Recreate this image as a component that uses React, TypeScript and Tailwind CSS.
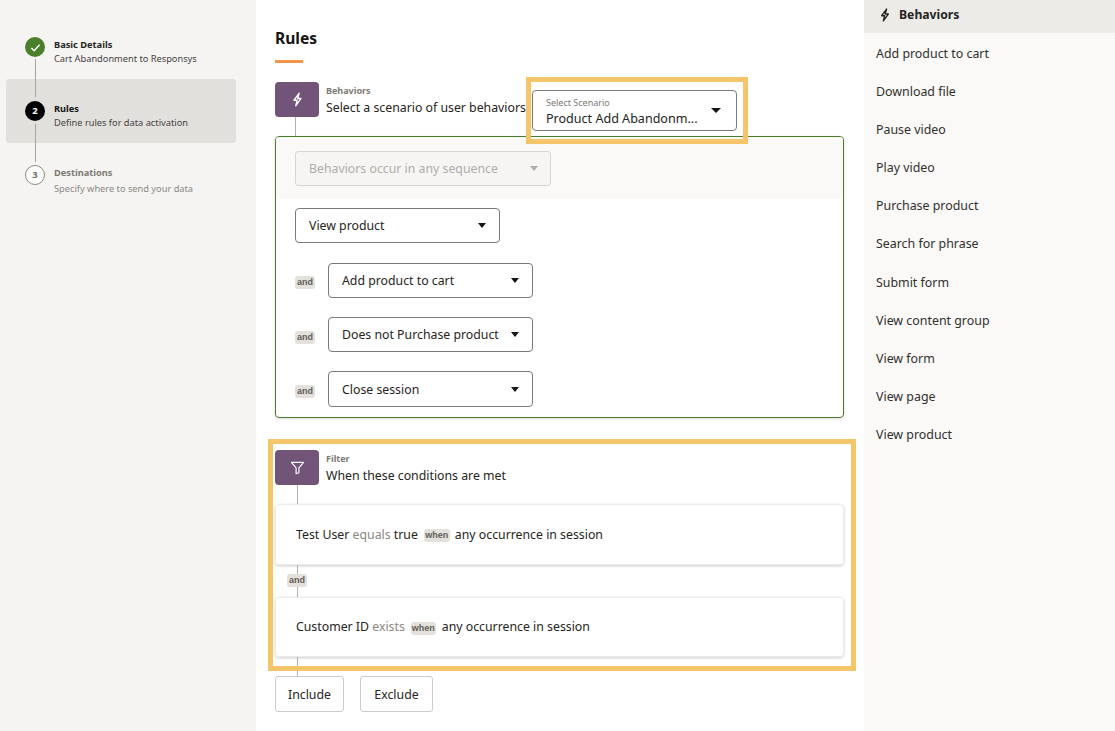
import React from "react";

function Bolt({ className, sw = 1.3 }: { className?: string; sw?: number }) {
  return (
    <svg viewBox="0 0 16 16" className={className} fill="none" stroke="currentColor" strokeWidth={sw} strokeLinejoin="round">
      <path d="M9.8 1.2 4.2 8.8h3.4l-1.5 6 5.7-7.9H8.2z" />
    </svg>
  );
}

function Caret({ className }: { className?: string }) {
  return <span className={"block w-0 h-0 border-x-[4.5px] border-x-transparent border-t-[5px] " + (className ?? "border-t-[#161513]")} />;
}

function Select({ label, h = "h-[35px]" }: { label: string; h?: string }) {
  return (
    <div className={`w-[205px] ${h} flex items-center justify-between pl-[13px] pr-[13px] border border-[#7d7a76] rounded-[4px] bg-white text-[12.3px] text-[#262421]`}>
      <span className="pt-[2px]">{label}</span>
      <Caret />
    </div>
  );
}

function Tag({ children, className = "w-[20px]" }: { children: React.ReactNode; className?: string }) {
  return (
    <span className={`inline-flex items-center justify-center h-[13px] rounded-[3px] bg-[#e4e1dc] text-[9px] font-bold text-[#5f5c58] leading-none ${className}`} style={{ fontFamily: '"Liberation Sans Narrow", "Liberation Sans", sans-serif' }}>
      {children}
    </span>
  );
}

function Line({ h, ml = "ml-[22px]" }: { h: string; ml?: string }) {
  return <div className={`w-px bg-[#b5b0a9] ${h} ${ml}`} />;
}

function Step({ circle, title, sub, muted, active }: { circle: React.ReactNode; title: string; sub: string; muted?: boolean; active?: boolean }) {
  return (
    <div className="flex items-start gap-[9px] h-[20px]">
      {circle}
      <div className="flex flex-col pt-[1px]">
        <span className={`text-[9.25px] font-bold leading-[14px] ${muted ? "text-[#7c7975]" : active ? "text-[#161513]" : "text-[#262421]"}`}>{title}</span>
        <span className={`text-[9.25px] leading-[14px] ${muted ? "text-[#8b8884] mt-[2px]" : "text-[#45423e]"}`}>{sub}</span>
      </div>
    </div>
  );
}

function Highlight({ className }: { className: string }) {
  return <div className={`absolute border-[5px] border-[#f5c56b] pointer-events-none ${className}`} />;
}

export default function App() {
  return (
    <div className="relative flex w-[1115px] h-[731px] overflow-hidden bg-white" style={{ fontFamily: '"Noto Sans", "Open Sans", sans-serif' }}>
      {/* steps */}
      <aside className="w-[256px] shrink-0 bg-[#f5f4f2] pt-[37px] px-[6px]">
        <div className="pl-[19px]">
          <Step
            title="Basic Details"
            sub="Cart Abandonment to Responsys"
            circle={
              <span className="w-[20px] h-[20px] rounded-full bg-[#4a7f2b] flex items-center justify-center shrink-0">
                <svg viewBox="0 0 12 12" className="w-[11px] h-[11px]" fill="none" stroke="white" strokeWidth="1.5"><path d="M1.5 6.5 4.5 9.5 10.5 3" /></svg>
              </span>
            }
          />
        </div>
        <div className="w-px h-[20px] bg-[#a8a5a0] ml-[29px] mt-[2px]" />
        <div className="bg-[#e2e0dc] rounded-[3px] w-[230px] h-[64px]">
          <div className="w-px h-[18px] bg-[#a8a5a0] ml-[29px]" />
          <div className="pl-[19px] mt-[4px]">
            <Step
              active
              title="Rules"
              sub="Define rules for data activation"
              circle={<span className="w-[20px] h-[20px] rounded-full bg-black text-white text-[9.5px] font-bold flex items-center justify-center shrink-0">2</span>}
            />
          </div>
          <div className="w-px h-[19px] bg-[#a8a5a0] ml-[29px] mt-[3px]" />
        </div>
        <div className="w-px h-[19px] bg-[#a8a5a0] ml-[29px]" />
        <div className="pl-[19px] mt-[3px]">
          <Step
            muted
            title="Destinations"
            sub="Specify where to send your data"
            circle={<span className="w-[20px] h-[20px] rounded-full border border-[#8b8884] bg-white text-[#6f6c68] text-[9.5px] font-bold flex items-center justify-center shrink-0">3</span>}
          />
        </div>
      </aside>

      {/* main */}
      <main className="w-[608px] shrink-0 pl-[19px] pr-[20px] pt-[27px]">
        <h1 className="text-[15.6px] font-bold leading-[22px] text-[#161513]">Rules</h1>
        <div className="w-[28px] h-[3px] bg-[#f0954a] mt-[11px]" />

        <div className="flex mt-[19px] h-[49px]">
          <div className="w-[44px] flex flex-col">
            <div className="w-[44px] h-[35px] rounded-[4px] bg-[#715477] text-white flex items-center justify-center">
              <Bolt className="w-[15px] h-[15px]" sw={1.4} />
            </div>
            <Line h="h-[14px]" ml="ml-[20px]" />
          </div>
          <div className="ml-[7px] w-[199px] flex flex-col whitespace-nowrap">
            <span className="text-[9px] font-bold leading-[12px] text-[#7c7975] mt-[3px]">Behaviors</span>
            <span className="text-[12.3px] leading-[18px] text-[#262421] mt-[2px]">Select a scenario of user behaviors</span>
          </div>
          <div className="ml-[7px] w-[205px] h-[41px] mt-[8px] flex items-center justify-between border border-[#7d7a76] rounded-[4px] pl-[13px] pr-[15px]">
            <div className="flex flex-col pt-[3px]">
              <span className="text-[9px] leading-[12px] text-[#7c7975]">Select Scenario</span>
              <span className="text-[12.55px] leading-[18px] text-[#262421] mt-[1px]">Product Add Abandonm...</span>
            </div>
            <span className="block w-0 h-0 border-x-[5px] border-x-transparent border-t-[5px] border-t-[#161513]" />
          </div>
        </div>

        <Line h="h-[5px]" ml="ml-[20px]" />
        <div className="h-[282px] border border-[#4a7a2c] rounded-[4px] shadow-[0_1px_3px_rgba(0,0,0,0.15)] overflow-hidden">
          <div className="h-[62px] bg-[#fbf9f8] pl-[19px] pt-[14px]">
            <div className="w-[256px] h-[35px] flex items-center justify-between pl-[13px] pr-[12px] border border-[#d9d6d2] rounded-[3px] bg-[#f6f5f3] text-[12.3px] text-[#b0ada8]">
              <span className="pt-[1px]">Behaviors occur in any sequence</span>
              <Caret className="border-t-[#b0ada8]" />
            </div>
          </div>
          <div className="pl-[19px] pt-[9px] flex flex-col">
            <Select label="View product" />
            <div className="flex items-center mt-[20px]">
              <Tag className="w-[20px] mt-[4px]">and</Tag>
              <span className="w-[13px]" />
              <Select label="Add product to cart" />
            </div>
            <div className="flex items-center mt-[19px]">
              <Tag className="w-[20px] mt-[5px]">and</Tag>
              <span className="w-[13px]" />
              <Select label="Does not Purchase product" />
            </div>
            <div className="flex items-center mt-[19px]">
              <Tag className="w-[20px] mt-[4px]">and</Tag>
              <span className="w-[13px]" />
              <Select label="Close session" h="h-[36px]" />
            </div>
          </div>
        </div>

        <div className="flex mt-[32px] h-[35px]">
          <div className="w-[44px] h-[35px] rounded-[4px] bg-[#715477] text-white flex items-center justify-center">
            <svg viewBox="0 0 16 16" className="w-[15px] h-[15px]" fill="none" stroke="currentColor" strokeWidth="1.2" strokeLinejoin="round"><path d="M1.5 2.5h13L9.5 8.5v5l-3 1.2V8.5z" /></svg>
          </div>
          <div className="ml-[7px] flex flex-col">
            <span className="text-[9px] font-bold leading-[12px] text-[#7c7975] mt-[3px]">Filter</span>
            <span className="text-[12.3px] leading-[18px] text-[#262421] mt-[2px]">When these conditions are met</span>
          </div>
        </div>
        <Line h="h-[19px]" />
        <div className="h-[61px] border border-[#eeece9] rounded-[4px] shadow-[0_1px_3px_rgba(0,0,0,0.2)] flex items-center pl-[20px] text-[12.3px] text-[#262421]">
          <span className="pt-[1px]">Test User <span className="text-[#8b8884]">equals</span> true</span>
          <Tag className="w-[26px] ml-[6px] mr-[5px] mt-[2px]">when</Tag>
          <span className="pt-[1px]">any occurrence in session</span>
        </div>
        <Line h="h-[9px]" />
        <div className="flex ml-[12px]"><Tag>and</Tag></div>
        <Line h="h-[10px]" />
        <div className="h-[60px] border border-[#eeece9] rounded-[4px] shadow-[0_1px_3px_rgba(0,0,0,0.2)] flex items-center pl-[20px] text-[12.3px] text-[#262421]">
          <span>Customer ID <span className="text-[#8b8884]">exists</span></span>
          <Tag className="w-[25px] ml-[6px] mr-[6px] mt-[2px]">when</Tag>
          <span>any occurrence in session</span>
        </div>
        <Line h="h-[19px]" />
        <div className="flex gap-[16px]">
          <div className="w-[69px] h-[36px] border border-[#cfccc7] rounded-[3px] flex items-center justify-center pt-[2px] text-[12.3px] text-[#262421]">Include</div>
          <div className="w-[73px] h-[36px] border border-[#cfccc7] rounded-[3px] flex items-center justify-center pt-[2px] text-[12.3px] text-[#262421]">Exclude</div>
        </div>
      </main>

      {/* palette */}
      <aside className="flex-1 bg-[#fbf9f8]">
        <div className="h-[33px] bg-[#ecebe8] flex items-center pl-[14px] pb-[3px] text-[12.2px] font-bold text-[#262421]">
          <Bolt className="w-[14px] h-[14px] mr-[7px]" sw={1.6} />
          Behaviors
        </div>
        <ul className="pt-[2px] text-[12.4px] text-[#312f2c]">
          {["Add product to cart", "Download file", "Pause video", "Play video", "Purchase product", "Search for phrase", "Submit form", "View content group", "View form", "View page", "View product"].map((t) => (
            <li key={t} className="h-[38.15px] flex items-center pl-[12px]">{t}</li>
          ))}
        </ul>
      </aside>

      <Highlight className="left-[526px] top-[77px] w-[222px] h-[67px]" />
      <Highlight className="left-[268px] top-[439px] w-[588px] h-[232px]" />
    </div>
  );
}
